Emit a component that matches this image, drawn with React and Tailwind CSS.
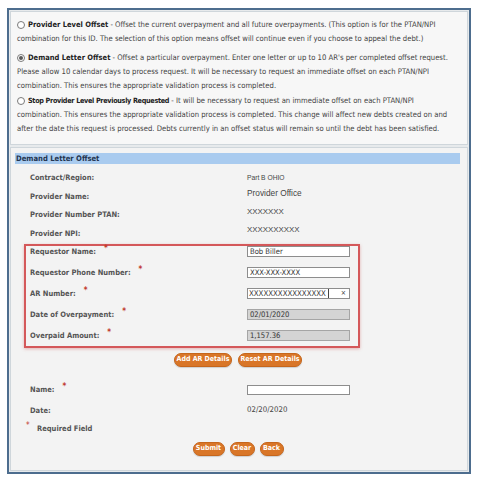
const Radio = ({ checked }) => (
  <span className="inline-flex items-center justify-center w-[8px] h-[8px] rounded-full border border-[#7a7a7a] bg-white mr-[3px] shrink-0">
    {checked && <span className="w-[4px] h-[4px] rounded-full bg-[#5a5a5a]" />}
  </span>
);

const Star = () => (
  <span className="inline-block ml-[8px] text-[#c0392b] text-[8px] -translate-y-[3px]">*</span>
);

const Label = ({ children, star }) => (
  <div className="w-[217px] shrink-0 font-bold text-[7.5px] text-[#555] leading-[12px] whitespace-nowrap">
    {children}
    {star && <Star />}
  </div>
);

const Input = ({ value, gray }) => (
  <div
    className={
      "w-[103px] h-[11px] mt-[0.5px] border flex items-center pl-[2px] text-[7.6px] text-[#333] leading-none whitespace-nowrap " +
      (gray ? "bg-[#d4d4d4] border-[#a5a5a5]" : "bg-white border-[#8d8d8d]")
    }
  >
    {value}
  </div>
);

const Btn = ({ children, w }) => (
  <div
    className={
      "h-[14px] rounded-full bg-[#d97628] border border-[#c6661c] text-white font-bold text-[7px] flex items-center justify-center whitespace-nowrap shadow-[0_1px_1px_rgba(0,0,0,0.15)] " +
      w
    }
  >
    {children}
  </div>
);

export default function App() {
  return (
    <div className="w-[479px] h-[483px] bg-white pt-[8px] pl-[7px] font-['DejaVu_Sans_Condensed','Liberation_Sans',sans-serif] text-[#444]">
      <div className="w-[464px] h-[466px] border-2 border-[#4d6d8e] bg-[#e7eaec] p-px flex flex-col gap-[2px]">
        {/* Top options box */}
        <div className="h-[134px] shrink-0 border border-[#cfd6db] bg-[#f7f7f7] pt-[6px] pl-[6px] text-[7.65px] leading-[14px] whitespace-nowrap">
          <div>
            <div className="flex items-center h-[14px]">
              <Radio />
              <span>
                <b className="text-[#222] text-[7.5px]">Provider Level Offset</b> - Offset the current overpayment and all future overpayments. (This option is for the PTAN/NPI
              </span>
            </div>
            <div className="h-[14px]">
              combination for this ID. The selection of this option means offset will continue even if you choose to appeal the debt.)
            </div>
          </div>
          <div className="mt-[5px]">
            <div className="flex items-center h-[14px]">
              <Radio checked />
              <span>
                <b className="text-[#222] text-[7.5px]">Demand Letter Offset</b> - Offset a particular overpayment. Enter one letter or up to 10 AR's per completed offset request.
              </span>
            </div>
            <div className="h-[14px]">
              Please allow 10 calendar days to process request. It will be necessary to request an immediate offset on each PTAN/NPI
            </div>
            <div className="h-[14px]">
              combination. This ensures the appropriate validation process is completed.
            </div>
          </div>
          <div>
            <div className="flex items-center h-[15px]">
              <Radio />
              <span>
                <b className="text-[#222] text-[7.2px] tracking-[-0.3px]">Stop Provider Level Previously Requested</b> - It will be necessary to request an immediate offset on each PTAN/NPI
              </span>
            </div>
            <div className="h-[14px]">
              combination. This ensures the appropriate validation process is completed. This change will affect new debts created on and
            </div>
            <div className="h-[14px]">
              after the date this request is processed. Debts currently in an offset status will remain so until the debt has been satisfied.
            </div>
          </div>
        </div>

        {/* Demand Letter Offset form */}
        <div className="flex-1 border border-[#cfd6db] bg-[#f3f3f3] pt-[5px] pl-[4px]">
          <div className="w-[445px] h-[11px] bg-[#a9cbef] pl-[1px] text-[7.6px] font-bold text-[#23344f] leading-[11px]">
            Demand Letter Offset
          </div>

          <div className="mt-[5px] pl-[15px]">
            <div className="flex h-[18.5px] items-start">
              <div className="w-[217px] pt-[3px]">
                <Label>Contract/Region:</Label>
              </div>
              <div className="pt-[4px] font-['Liberation_Sans',sans-serif] text-[6.7px] leading-[10px] text-[#444]">Part B OHIO</div>
            </div>
            <div className="flex h-[18.5px] items-start">
              <div className="w-[217px] pt-[3px]">
                <Label>Provider Name:</Label>
              </div>
              <div className="pt-[0.5px] font-['Liberation_Sans',sans-serif] text-[8.3px] leading-[10px] text-[#444]">Provider Office</div>
            </div>
            <div className="flex h-[18.5px] items-start">
              <div className="w-[217px] pt-[3px]">
                <Label>Provider Number PTAN:</Label>
              </div>
              <div className="pt-[1px] font-['Liberation_Sans',sans-serif] text-[7.9px] leading-[10px] text-[#444]">XXXXXXX</div>
            </div>
            <div className="flex h-[18.5px] items-start">
              <div className="w-[217px] pt-[3px]">
                <Label>Provider NPI:</Label>
              </div>
              <div className="pt-[0.5px] font-['Liberation_Sans',sans-serif] text-[7.9px] leading-[10px] text-[#444]">XXXXXXXXXX</div>
            </div>
          </div>

          <div className="ml-[9px] mt-[0.5px] w-[336px] h-[104px] border-2 border-[#d4585a] shadow-[0_1px_3px_rgba(200,60,60,0.35)] pl-[4px]">
            <div className="flex h-[21px] items-start">
              <Label star>Requestor Name:</Label>
              <Input value="Bob Biller" />
            </div>
            <div className="flex h-[21px] items-start">
              <Label star>Requestor Phone Number:</Label>
              <Input value="XXX-XXX-XXXX" />
            </div>
            <div className="flex h-[21px] items-start">
              <Label star>AR Number:</Label>
              <div className="w-[103px] h-[11px] mt-[0.5px] border border-[#8d8d8d] bg-white flex text-[7.8px] text-[#333] leading-none">
                <div className="w-[81px] border-r border-[#444] flex items-center pl-[1px] whitespace-nowrap overflow-hidden">
                  XXXXXXXXXXXXXXXX
                </div>
                <div className="flex-1 flex items-center justify-end pr-[3px] text-[7px] text-[#333]">×</div>
              </div>
            </div>
            <div className="flex h-[21px] items-start">
              <Label star>Date of Overpayment:</Label>
              <Input value="02/01/2020" gray />
            </div>
            <div className="flex h-[21px] items-start">
              <Label star>Overpaid Amount:</Label>
              <Input value="1,157.36" gray />
            </div>
          </div>

          <div className="w-[446px] mt-[5px] flex justify-center gap-[6px]">
            <Btn w="w-[58px]">Add AR Details</Btn>
            <Btn w="w-[64px]">Reset AR Details</Btn>
          </div>

          <div className="mt-[13px] pl-[15px]">
            <div className="flex h-[20px] items-start">
              <div className="w-[217px] pt-[4px]">
                <Label star>Name:</Label>
              </div>
              <div className="w-[103px] h-[10px] mt-[5px] border border-[#8d8d8d] bg-white" />
            </div>
            <div className="flex h-[21px] items-start">
              <div className="w-[217px] pt-[5px]">
                <Label>Date:</Label>
              </div>
              <div className="pt-[5px] text-[7.8px] leading-[10px] text-[#444]">02/20/2020</div>
            </div>
          </div>
          <div className="flex h-[16px] items-center pl-[11px]">
            <span className="text-[#c0392b] text-[8px] -translate-y-[3px] w-[11px]">*</span>
            <span className="font-bold text-[7.5px] text-[#555]">Required Field</span>
          </div>

          <div className="w-[446px] mt-[5px] flex justify-center gap-[5px]">
            <Btn w="w-[32px]">Submit</Btn>
            <Btn w="w-[25px]">Clear</Btn>
            <Btn w="w-[24px]">Back</Btn>
          </div>
        </div>
      </div>
    </div>
  );
}
